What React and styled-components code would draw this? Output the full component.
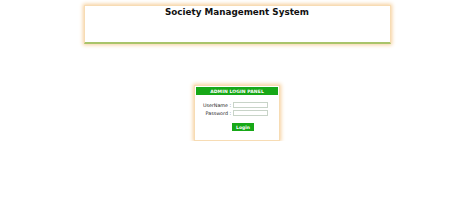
import React from "react";
import styled, { createGlobalStyle } from "styled-components";

const GlobalStyle = createGlobalStyle`
	body {
		margin: 0;
		background: #ffffff;
		font-family: Verdana, "DejaVu Sans", sans-serif;
	}
`;

const Page = styled.div`
	display: flex;
	flex-direction: column;
	align-items: center;
	padding-top: 5px;
`;

const Header = styled.div`
	width: 305px;
	height: 36px;
	background: #ffffff;
	border: 1px solid #f7dcb4;
	border-bottom: 2px solid #a9c46a;
	box-shadow: 0 0 4px 1px #f6cf9a;
	display: flex;
	justify-content: center;
`;

const Title = styled.h1`
	margin: 1px 0 0;
	font-size: 8.8px;
	font-weight: bold;
	color: #111111;
`;

const Panel = styled.div`
	margin-top: 41px;
	width: 82px;
	padding: 1px 1px 9px;
	background: #ffffff;
	border: 1px solid #f7dcb4;
	box-shadow: 0 0 4px 1px #f6cf9a;
	display: flex;
	flex-direction: column;
	align-items: center;
`;

const PanelHead = styled.div`
	align-self: stretch;
	height: 8px;
	background: #17a817;
	color: #ffffff;
	font-size: 4.5px;
	font-weight: bold;
	display: flex;
	align-items: center;
	justify-content: center;
	letter-spacing: 0.1px;
`;

const Form = styled.div`
	margin-top: 7px;
	margin-left: -3px;
	display: grid;
	grid-template-columns: auto auto;
	column-gap: 2px;
	row-gap: 2px;
	align-items: center;
`;

const Label = styled.label`
	font-size: 4.8px;
	color: #222222;
	text-align: right;
`;

const Input = styled.input`
	width: 33px;
	height: 4px;
	padding: 0;
	border: 1px solid #c8d4c8;
	outline: none;
	box-sizing: content-box;
`;

const Button = styled.button`
	margin-top: 7px;
	margin-left: 12px;
	width: 22px;
	height: 8px;
	padding: 0;
	border: none;
	background: #17a817;
	color: #ffffff;
	font-family: Verdana, "DejaVu Sans", sans-serif;
	font-size: 4.5px;
	font-weight: bold;
`;

export default function App() {
	return (
		<>
			<GlobalStyle />
			<Page>
				<Header>
					<Title>Society Management System</Title>
				</Header>
				<Panel>
					<PanelHead>ADMIN LOGIN PANEL</PanelHead>
					<Form>
						<Label>UserName :</Label>
						<Input type="text" />
						<Label>Password :</Label>
						<Input type="password" />
					</Form>
					<Button>Login</Button>
				</Panel>
			</Page>
		</>
	);
}
